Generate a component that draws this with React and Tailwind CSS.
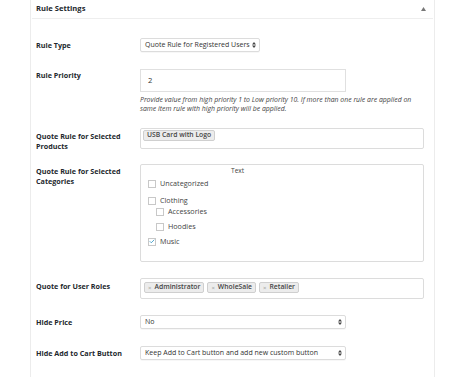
import { Check } from 'lucide-react'

function Select({ value, className = '' }) {
  return (
    <div className={`h-[14px] rounded-[2px] border border-[#dcdcdc] bg-white flex items-center justify-between pl-[4px] pr-[3px] text-[7px] text-[#333] whitespace-nowrap shadow-[0_1px_0_rgba(0,0,0,0.03)] ${className}`}>
      <span>{value}</span>
      <svg width="4" height="6" viewBox="0 0 4 6" className="text-[#444] shrink-0">
        <path d="M2 0L4 2.4H0z M2 6L0 3.6H4z" fill="currentColor" />
      </svg>
    </div>
  )
}

function Tag({ children, x }) {
  return (
    <span className="inline-flex items-center h-[11px] rounded-[2px] border border-[#cfcfcf] bg-[#ececec] px-[3px] text-[6.8px] text-[#444] font-semibold leading-none whitespace-nowrap">
      {x && <span className="mr-[3px] text-[#999] font-normal text-[6px]">×</span>}
      {children}
    </span>
  )
}

function Box({ checked }) {
  return (
    <span className="w-[8px] h-[8px] border border-[#c8c8c8] bg-white flex items-center justify-center shrink-0">
      {checked && <Check size={7} strokeWidth={3} className="text-[#1e8cbe]" />}
    </span>
  )
}

function Row({ label, children, className = '', labelClass = '' }) {
  return (
    <div className={`flex ${className}`}>
      <div className={`w-[104px] shrink-0 text-[7.2px] font-bold text-[#23282d] leading-[10px] ${labelClass}`}>{label}</div>
      <div className="flex-1">{children}</div>
    </div>
  )
}

export default function App() {
  return (
    <div className="w-[474px] h-[377px] bg-white overflow-hidden" style={{ fontFamily: '"Open Sans", "Liberation Sans", sans-serif' }}>
      <div className="ml-[30px] w-[405px] h-full border-x border-[#ececec]">
        <div className="h-[19px] mx-[1px] border-b border-[#eeeeee] flex items-center justify-between pl-[4px] pr-[7px]">
          <span className="text-[7.6px] font-bold text-[#23282d]">Rule Settings</span>
          <svg width="5" height="4" viewBox="0 0 5 4"><path d="M2.5 0L5 4H0z" fill="#777" /></svg>
        </div>
        <div className="pl-[5px]">
          <Row label="Rule Type" className="mt-[19px] items-center">
            <Select value="Quote Rule for Registered Users" className="w-[120px]" />
          </Row>
          <Row label="Rule Priority" className="mt-[17px]" labelClass="mt-[1px]">
            <div className="w-[206px] h-[23px] border border-[#e0e0e0] bg-white flex items-center pl-[7px] text-[7.6px] text-[#333]">2</div>
            <p className="mt-[3px] italic text-[6.9px] leading-[9px] text-[#444] w-[276px]">
              Provide value from high priority 1 to Low priority 10. If more than one rule are applied on same item rule with high priority will be applied.
            </p>
          </Row>
          <Row label={<>Quote Rule for Selected<br />Products</>} className="mt-[15px]" labelClass="mt-[3px]">
            <div className="w-[284px] h-[21px] border border-[#dcdcdc] rounded-[2px] bg-white pt-[1px] pl-[2px] flex items-start">
              <Tag>USB Card with Logo</Tag>
            </div>
          </Row>
          <Row label={<>Quote Rule for Selected<br />Categories</>} className="mt-[13px]" labelClass="mt-[2px]">
            <div className="w-[284px] h-[98px] border border-[#dcdcdc] rounded-[2px] bg-white text-[7.2px] text-[#444] leading-none">
              <div className="mt-[3px] ml-[90px] text-[6.6px]">Text</div>
              <div className="ml-[7px] mt-[5px] flex items-center gap-[4px]"><Box />Uncategorized</div>
              <div className="ml-[7px] mt-[9px] flex items-center gap-[4px]"><Box />Clothing</div>
              <div className="ml-[15px] mt-[3px] flex items-center gap-[4px]"><Box />Accessories</div>
              <div className="ml-[15px] mt-[7px] flex items-center gap-[4px]"><Box />Hoodies</div>
              <div className="ml-[7px] mt-[7px] flex items-center gap-[4px]"><Box checked />Music</div>
            </div>
          </Row>
          <Row label="Quote for User Roles" className="mt-[16px]" labelClass="mt-[3px]">
            <div className="w-[284px] h-[21px] border border-[#dcdcdc] rounded-[2px] bg-white pt-[3px] pl-[3px] flex items-start gap-[3px]">
              <Tag x>Administrator</Tag>
              <Tag x>WholeSale</Tag>
              <Tag x>Retailer</Tag>
            </div>
          </Row>
          <Row label="Hide Price" className="mt-[16px] items-center">
            <Select value="No" className="w-[206px]" />
          </Row>
          <Row label="Hide Add to Cart Button" className="mt-[17px] items-center">
            <Select value="Keep Add to Cart button and add new custom button" className="w-[206px]" />
          </Row>
        </div>
      </div>
    </div>
  )
}
